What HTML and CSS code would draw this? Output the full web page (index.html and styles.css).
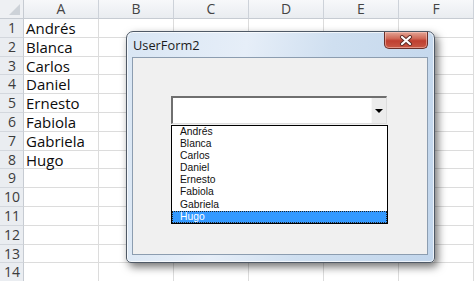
FILE: index.html
```html
<!DOCTYPE html>
<html lang="en">
<head>
  <meta charset="UTF-8">
  <title>UserForm2</title>
  <link rel="stylesheet" href="styles.css">
</head>
<body>

<div class="sheet">
  <div class="corner"><span class="tri"></span></div>
  <div class="col-head">A</div>
  <div class="col-head">B</div>
  <div class="col-head">C</div>
  <div class="col-head">D</div>
  <div class="col-head">E</div>
  <div class="col-head">F</div>

  <div class="row-head">1</div><div class="cell">Andrés</div><div class="cell"></div><div class="cell"></div><div class="cell"></div><div class="cell"></div><div class="cell"></div>
  <div class="row-head">2</div><div class="cell">Blanca</div><div class="cell"></div><div class="cell"></div><div class="cell"></div><div class="cell"></div><div class="cell"></div>
  <div class="row-head">3</div><div class="cell">Carlos</div><div class="cell"></div><div class="cell"></div><div class="cell"></div><div class="cell"></div><div class="cell"></div>
  <div class="row-head">4</div><div class="cell">Daniel</div><div class="cell"></div><div class="cell"></div><div class="cell"></div><div class="cell"></div><div class="cell"></div>
  <div class="row-head">5</div><div class="cell">Ernesto</div><div class="cell"></div><div class="cell"></div><div class="cell"></div><div class="cell"></div><div class="cell"></div>
  <div class="row-head">6</div><div class="cell">Fabiola</div><div class="cell"></div><div class="cell"></div><div class="cell"></div><div class="cell"></div><div class="cell"></div>
  <div class="row-head">7</div><div class="cell">Gabriela</div><div class="cell"></div><div class="cell"></div><div class="cell"></div><div class="cell"></div><div class="cell"></div>
  <div class="row-head">8</div><div class="cell">Hugo</div><div class="cell"></div><div class="cell"></div><div class="cell"></div><div class="cell"></div><div class="cell"></div>
  <div class="row-head">9</div><div class="cell"></div><div class="cell"></div><div class="cell"></div><div class="cell"></div><div class="cell"></div><div class="cell"></div>
  <div class="row-head">10</div><div class="cell"></div><div class="cell"></div><div class="cell"></div><div class="cell"></div><div class="cell"></div><div class="cell"></div>
  <div class="row-head">11</div><div class="cell"></div><div class="cell"></div><div class="cell"></div><div class="cell"></div><div class="cell"></div><div class="cell"></div>
  <div class="row-head">12</div><div class="cell"></div><div class="cell"></div><div class="cell"></div><div class="cell"></div><div class="cell"></div><div class="cell"></div>
  <div class="row-head">13</div><div class="cell"></div><div class="cell"></div><div class="cell"></div><div class="cell"></div><div class="cell"></div><div class="cell"></div>
  <div class="row-head">14</div><div class="cell"></div><div class="cell"></div><div class="cell"></div><div class="cell"></div><div class="cell"></div><div class="cell"></div>
</div>

<!-- the user form floats over the worksheet -->
<div class="dialog">
  <div class="title">UserForm2</div>
  <div class="close">
    <svg width="14" height="11" viewBox="0 0 14 11">
      <path d="M3 2 L11 9 M11 2 L3 9" stroke="#5a2a24" stroke-width="4" stroke-linecap="round"/>
      <path d="M3 2 L11 9 M11 2 L3 9" stroke="#ffffff" stroke-width="2.2" stroke-linecap="round"/>
    </svg>
  </div>
  <div class="client">
    <div class="combo">
      <div class="combo-text"></div>
      <div class="combo-btn"><span class="arrow"></span></div>
    </div>
  </div>
</div>

<ul class="droplist">
  <li>Andrés</li>
  <li>Blanca</li>
  <li>Carlos</li>
  <li>Daniel</li>
  <li>Ernesto</li>
  <li>Fabiola</li>
  <li>Gabriela</li>
  <li class="selected">Hugo</li>
</ul>

</body>
</html>
```

FILE: styles.css
```css
* {
  box-sizing: border-box;
}

body {
  margin: 0;
  width: 474px;
  height: 281px;
  overflow: hidden;
  background-color: #fff;
  font-family: "Open Sans", Arial, sans-serif;
}

.sheet {
  display: grid;
  grid-template-columns: 24px repeat(6, 75px);
  grid-template-rows: 19px repeat(14, 18.8px);
}

.corner {
  position: relative;
  background-color: #eef0f3;
  border-right: 1px solid #c6cbd2;
  border-bottom: 1px solid #c6cbd2;
}

.corner .tri {
  position: absolute;
  right: 3px;
  bottom: 3px;
  width: 0;
  height: 0;
  border-left: 11px solid transparent;
  border-bottom: 11px solid #cdd2d8;
}

.col-head {
  background: linear-gradient(#f7f8fa, #e9ecf0);
  border-right: 1px solid #cdd2d9;
  border-bottom: 1px solid #c6cbd2;
  color: #444;
  font-size: 14px;
  line-height: 18px;
  text-align: center;
}

.row-head {
  background-color: #eaedf1;
  border-right: 1px solid #c6cbd2;
  border-bottom: 1px solid #d3d7dd;
  color: #3c3c3c;
  font-size: 14px;
  line-height: 18px;
  text-align: center;
  padding-left: 1px;
}

.cell {
  border-right: 1px solid #dcdcdc;
  border-bottom: 1px solid #dcdcdc;
  color: #0c0c0c;
  font-size: 15px;
  line-height: 18px;
  padding-left: 2px;
  white-space: nowrap;
}

/* Windows 7 style form */
.dialog {
  position: absolute;
  left: 126px;
  top: 31px;
  width: 309px;
  height: 232px;
  padding: 25px 6px 7px 5px;
  border: 1px solid #4f5966;
  border-radius: 7px 7px 5px 5px;
  background: linear-gradient(100deg, #d9e6f4 0%, #e6eef8 35%, #cfdff0 60%, #c2d6ec 100%);
  box-shadow: 3px 4px 8px rgba(0, 0, 0, 0.55), inset 0 0 0 1px rgba(255, 255, 255, 0.7);
}

.title {
  position: absolute;
  left: 6px;
  top: 4px;
  font-size: 12.8px;
  color: #1b1b1b;
}

.close {
  position: absolute;
  right: 6px;
  top: 0;
  width: 44px;
  height: 17px;
  border: 1px solid #6a2f29;
  border-top: none;
  border-radius: 0 0 5px 5px;
  background: linear-gradient(#e3a596 0%, #d06a58 40%, #bf3f30 55%, #c85844 100%);
  display: flex;
  align-items: center;
  justify-content: center;
  box-shadow: inset 0 0 0 1px rgba(255, 210, 200, 0.5);
}

.client {
  height: 100%;
  background-color: #f0f0f0;
  border: 1px solid #8c9db0;
  padding: 38px 0 0 38px;
}

.combo {
  display: flex;
  width: 216px;
  height: 28px;
  background-color: #fff;
  border-top: 2px solid #6f6f6f;
  border-left: 2px solid #6f6f6f;
  border-right: 1px solid #dcdcdc;
  border-bottom: 1px solid #dcdcdc;
}

.combo-text {
  flex: 1;
}

.combo-btn {
  width: 15px;
  background-color: #ececec;
  border-left: 1px solid #f8f8f8;
  display: flex;
  align-items: center;
  justify-content: center;
}

.combo-btn .arrow {
  width: 0;
  height: 0;
  border-left: 4px solid transparent;
  border-right: 4px solid transparent;
  border-top: 4px solid #000;
  margin-top: 1px;
}

.droplist {
  position: absolute;
  left: 171px;
  top: 125px;
  width: 217px;
  margin: 0;
  padding: 0;
  list-style: none;
  background-color: #fff;
  border: 1px solid #000;
  font-family: "Liberation Sans", Arial, sans-serif;
  font-size: 10.3px;
}

.droplist li {
  height: 12.1px;
  line-height: 12px;
  padding-left: 8px;
  color: #111;
}

.droplist .selected {
  background-color: #3399ff;
  color: #fff;
  outline: 1px dotted #222;
  outline-offset: -1px;
}
```
